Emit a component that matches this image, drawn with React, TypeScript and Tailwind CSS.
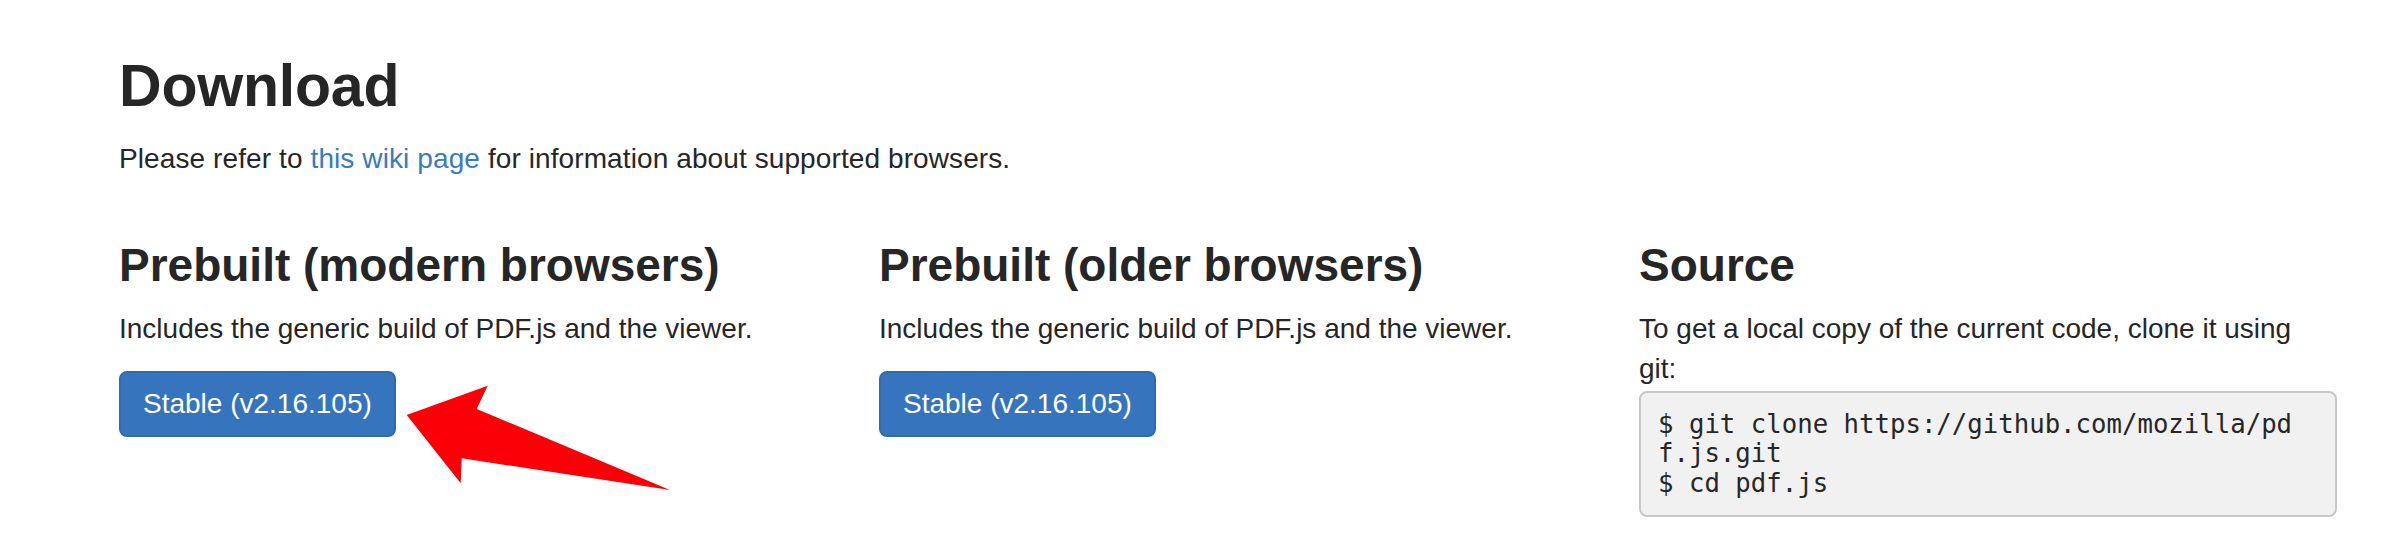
import React from "react";

const sans = { fontFamily: '"Liberation Sans", Arial, sans-serif' };

const StableButton = () => (
  <a
    href="#"
    className="mt-[22px] inline-flex h-[66px] items-center rounded-[8px] border-2 border-[#2e6cb0] bg-[#3674bd] px-[22px] text-[28px] leading-[40px] text-white"
  >
    Stable (v2.16.105)
  </a>
);

const App = () => {
  return (
    <div className="relative h-[542px] w-[2400px] overflow-hidden bg-white text-[#262626]" style={sans}>
      {/* Intro */}
      <div className="pl-[119px] pt-[54px]">
        <h2 className="text-[59px] font-bold leading-[65px] tracking-[-0.2px]">Download</h2>
        <p className="mt-[20px] text-[28px] leading-[40px] tracking-[0.1px]">
          Please refer to{" "}
          <a href="#" className="text-[#367bc4]">
            this wiki page
          </a>{" "}
          for information about supported browsers.
        </p>
      </div>

      {/* Columns */}
      <div className="mt-[61px] grid grid-cols-[700px_700px_700px] gap-x-[60px] pl-[119px]">
        <div className="flex flex-col items-start">
          <h3 className="text-[46px] font-bold leading-[51px]">Prebuilt (modern browsers)</h3>
          <p className="mt-[18px] text-[28px] leading-[40px]">Includes the generic build of PDF.js and the viewer.</p>
          <StableButton />
        </div>

        <div className="flex flex-col items-start">
          <h3 className="text-[46px] font-bold leading-[51px]">Prebuilt (older browsers)</h3>
          <p className="mt-[18px] text-[28px] leading-[40px]">Includes the generic build of PDF.js and the viewer.</p>
          <StableButton />
        </div>

        <div className="flex flex-col">
          <h3 className="text-[46px] font-bold leading-[51px]">Source</h3>
          <p className="mt-[18px] w-[680px] text-[28px] leading-[40px]">
            To get a local copy of the current code, clone it using git:
          </p>
          <pre
            className="mt-[2px] w-[698px] whitespace-pre-wrap break-all rounded-[8px] border-2 border-[#c8c8c8] bg-[#f1f1f1] pb-[17px] pl-[17px] pr-[30px] pt-[17px] text-[25.7px] leading-[29.3px] text-[#262626]"
            style={{ fontFamily: '"DejaVu Sans Mono", monospace' }}
          >
            {"$ git clone https://github.com/mozilla/pdf.js.git\n$ cd pdf.js"}
          </pre>
        </div>
      </div>

      {/* Red annotation arrow */}
      <svg
        className="pointer-events-none absolute left-[400px] top-[380px]"
        width="275"
        height="115"
        viewBox="0 0 275 115"
      >
        <polygon
          points="6.7,35 87.7,5.7 76.7,29 270,110 61.7,78.3 60.7,103.3"
          fill="#fb0007"
        />
      </svg>
    </div>
  );
};

export default App;
